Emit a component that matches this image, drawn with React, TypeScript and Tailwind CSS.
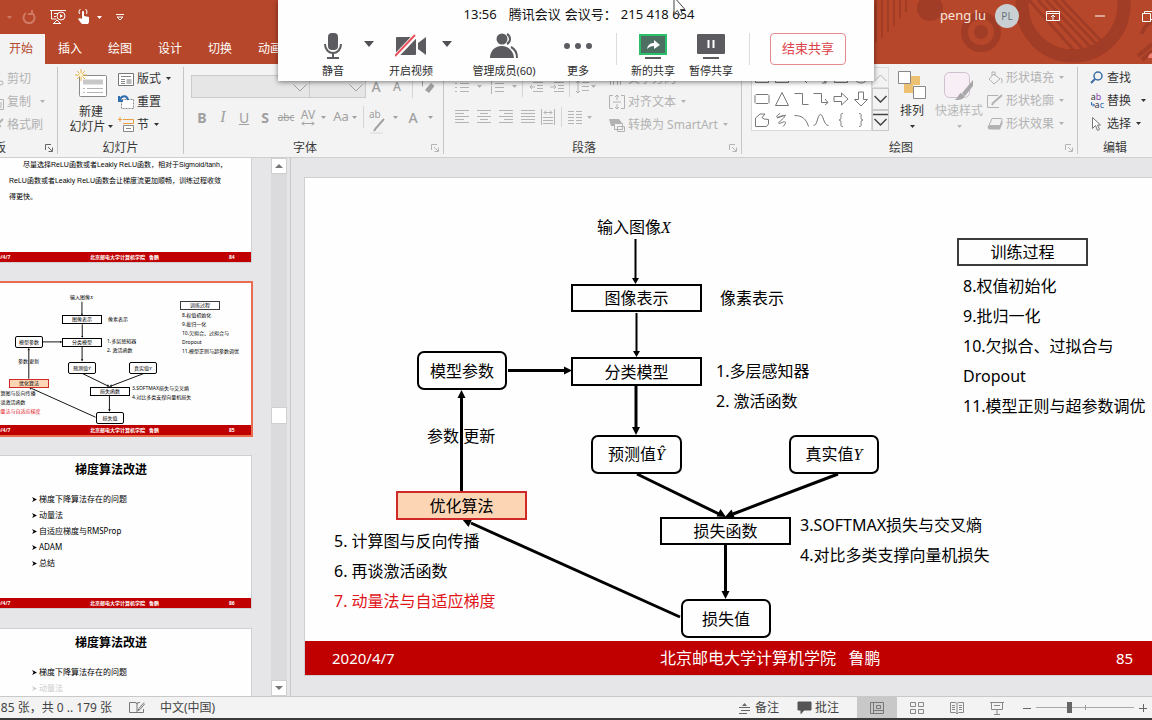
import React from "react";

const SLIDE_W = 884;
const SLIDE_H = 497;

type IconProps = { children: React.ReactNode; w?: number; h?: number; className?: string };

function Icon({ children, w = 16, h = 16, className = "" }: IconProps) {
  return (
    <svg
      width={w}
      height={h}
      viewBox={`0 0 ${w} ${h}`}
      fill="none"
      stroke="currentColor"
      aria-hidden="true"
      className={`shrink-0 ${className}`}
    >
      {children}
    </svg>
  );
}

function Caret({ className = "" }: { className?: string }) {
  return (
    <Icon w={5} h={3} className={className}>
      <path d="M0 0h5L2.5 3z" fill="currentColor" stroke="none" />
    </Icon>
  );
}

/* ---------- Slide content ---------- */

type Node = { x: number; y: number; w: number; h: number; kind: "box" | "round" | "hot" | "soft"; text: React.ReactNode };
type Note = { x: number; y: number; lines: { text: React.ReactNode; red?: boolean }[] };

const math = "font-['Liberation_Serif','Noto_Sans_CJK_SC',serif] italic";

const nodes: Node[] = [
  { x: 266, y: 106, w: 131, h: 28, kind: "box", text: "图像表示" },
  { x: 266, y: 179, w: 131, h: 29, kind: "box", text: "分类模型" },
  { x: 112, y: 173, w: 90, h: 39, kind: "round", text: "模型参数" },
  { x: 286, y: 257, w: 91, h: 39, kind: "round", text: <>预测值<i className={math}>Ŷ</i></> },
  { x: 484, y: 257, w: 90, h: 39, kind: "round", text: <>真实值<i className={math}>Y</i></> },
  { x: 355, y: 339, w: 131, h: 28, kind: "box", text: "损失函数" },
  { x: 376, y: 421, w: 90, h: 39, kind: "round", text: "损失值" },
  { x: 91, y: 313, w: 131, h: 29, kind: "hot", text: "优化算法" },
  { x: 652, y: 60, w: 131, h: 28, kind: "soft", text: "训练过程" },
];

const notes: Note[] = [
  { x: 292, y: 34, lines: [{ text: <>输入图像<i className={math}>X</i></> }] },
  { x: 415, y: 105, lines: [{ text: "像素表示" }] },
  { x: 411, y: 178, lines: [{ text: "1.多层感知器" }, { text: "2. 激活函数" }] },
  { x: 122, y: 243, lines: [{ text: "参数 更新" }] },
  { x: 495, y: 332, lines: [{ text: "3.SOFTMAX损失与交叉熵" }, { text: "4.对比多类支撑向量机损失" }] },
  {
    x: 29,
    y: 348,
    lines: [{ text: "5. 计算图与反向传播" }, { text: "6. 再谈激活函数" }, { text: "7. 动量法与自适应梯度", red: true }],
  },
  {
    x: 658,
    y: 93,
    lines: [
      { text: "8.权值初始化" },
      { text: "9.批归一化" },
      { text: "10.欠拟合、过拟合与" },
      { text: "Dropout" },
      { text: "11.模型正则与超参数调优" },
    ],
  },
];

const nodeStyle = {
  box: "border-black",
  round: "border-black",
  hot: "border-[#cf2a27] bg-[#fcd5b5]",
  soft: "border-[#3c3c3c]",
};

function Diagram({ scale }: { scale: number }) {
  const s = (n: number) => Math.round(n * scale);
  const small = scale < 1;
  return (
    <div className={small ? "text-[5px]" : "text-[16px]"}>
      <svg
        width={s(SLIDE_W)}
        height={s(SLIDE_H)}
        viewBox={`0 0 ${SLIDE_W} ${SLIDE_H}`}
        className="absolute top-0 left-0"
        fill="none"
        stroke="#000"
        strokeWidth={small ? 3 : 2}
        aria-hidden="true"
      >
        <path d="M330.500 61V102M331.500 135V175" />
        <path d="M203 192.500H260M156.500 313V220M331 208V250M420.500 367V415" strokeWidth="3" />
        <path d="M332 296L414 336M533 296L428 336M375 439L166 345" strokeWidth="3" />
        <g fill="#000" stroke="none">
          <path d="M327 100h7l-3.500 6z M328 173h7l-3.500 6z M259 188.500l8 4-8 4z M152.500 220l4-8 4 8z M327 249h8l-4 8z M416.500 413h8l-4 8z" />
          <path d="M421 339l-9.500-.5 4-7.500z M420 339l6.500-7.500 3 7.500z M157 341l10 .5-3.500 7.500z" />
        </g>
      </svg>
      {nodes.map((n, i) => (
        <div
          key={i}
          className={`absolute flex items-center justify-center whitespace-nowrap leading-none ${
            small ? "border" : "border-2"
          } ${n.kind === "round" ? (small ? "rounded-[2px]" : "rounded-[7px]") : ""} ${nodeStyle[n.kind]}`}
          style={{ left: s(n.x), top: s(n.y), width: s(n.w), height: s(n.h) }}
        >
          <span>{n.text}</span>
        </div>
      ))}
      {notes.map((n, i) => (
        <div
          key={i}
          className={`absolute whitespace-nowrap ${small ? "leading-[9px]" : "leading-[30px]"}`}
          style={{ left: s(n.x), top: s(n.y) }}
        >
          {n.lines.map((l, j) => (
            <p key={j} className={l.red ? "text-[#e0161b]" : ""}>
              {l.text}
            </p>
          ))}
        </div>
      ))}
    </div>
  );
}

function Slide({
  scale,
  page,
  selected = false,
  children,
}: {
  scale: number;
  page: number;
  selected?: boolean;
  children: React.ReactNode;
}) {
  const s = (n: number) => Math.round(n * scale);
  const small = scale < 1;
  return (
    <div
      className={`relative flex shrink-0 flex-col overflow-hidden bg-[#fefefe] text-black ${
        selected ? "shadow-[0_0_0_2px_#ea6c50]" : "shadow-[0_0_0_1px_#cfcfd2]"
      }`}
      style={{ width: s(SLIDE_W), height: s(SLIDE_H) }}
    >
      <div className="min-h-0 flex-1">{children}</div>
      <footer
        className={`flex items-center bg-[#c00000] whitespace-pre text-white ${
          small ? "text-[5px] leading-none font-bold" : "text-[15px]"
        }`}
        style={{ height: s(34) }}
      >
        <span style={{ paddingLeft: s(27), width: s(355) }}>2020/4/7</span>
        <span className={small ? "" : "text-[16px]"} style={{ width: s(456) }}>
          {"北京邮电大学计算机学院   鲁鹏"}
        </span>
        <span>{page}</span>
      </footer>
    </div>
  );
}

function OutlineSlide({ items, faded = 99 }: { items: string[]; faded?: number }) {
  return (
    <div>
      <h3 className="pt-[5px] pr-[10px] text-center text-[12px] leading-[18px] font-bold">梯度算法改进</h3>
      <ul className="mt-[12px] pl-[51px] text-[8px] leading-[16px]">
        {items.map((t, i) => (
          <li key={t} className={`flex items-center gap-[2px] whitespace-nowrap ${i >= faded ? "text-[#cccccc]" : ""}`}>
            <Icon w={5} h={5}>
              <path d="M0 0L5 2.500L0 5L1.500 2.500z" fill="currentColor" stroke="none" />
            </Icon>
            {t}
          </li>
        ))}
      </ul>
    </div>
  );
}

/* ---------- Ribbon ---------- */

function Group({
  label,
  className = "",
  launcher = true,
  dark = false,
  labelClass,
  children,
}: {
  label: string;
  className?: string;
  launcher?: boolean;
  dark?: boolean;
  labelClass?: string;
  children: React.ReactNode;
}) {
  return (
    <section className={`relative flex shrink-0 flex-col ${className}`} aria-label={label}>
      <div className="flex h-[75px] overflow-hidden">{children}</div>
      <div
        className={`flex h-[19px] items-center text-[12px] whitespace-nowrap text-[#3a3a3a] ${
          labelClass ?? (launcher ? "justify-center pr-[17px]" : "justify-center")
        }`}
      >
        {label}
      </div>
      {launcher && (
        <button
          aria-label={`${label}选项`}
          className={`absolute right-[4px] bottom-[5px] ${dark ? "text-[#666]" : "text-[#b5b5b5]"}`}
        >
          <Icon w={8} h={8}>
            <path d="M.5 6V.5H6M3 3l4 4M7.500 3.500v4h-4" />
          </Icon>
        </button>
      )}
    </section>
  );
}

function VLine({ className = "" }: { className?: string }) {
  return <span className={`my-[3px] w-px shrink-0 bg-[#c6c6c6] ${className}`} />;
}

function Row({
  icon,
  text,
  caret = false,
  disabled = false,
  className = "",
}: {
  icon: React.ReactNode;
  text: string;
  caret?: boolean;
  disabled?: boolean;
  className?: string;
}) {
  return (
    <button
      className={`flex h-[23px] items-center gap-[3px] text-[12px] whitespace-nowrap ${
        disabled ? "text-[#b2b2b2]" : "text-[#333]"
      } ${className}`}
    >
      {icon}
      <span>{text}</span>
      {caret && <Caret className="ml-[2px]" />}
    </button>
  );
}

function Lines({ d, className = "" }: { d: string; className?: string }) {
  return (
    <Icon w={14} h={16} className={className}>
      <path d={d} />
    </Icon>
  );
}

function Tool({ label, className, children }: { label: string; className: string; children: React.ReactNode }) {
  return (
    <button aria-label={label} className={`flex shrink-0 items-center justify-center ${className}`}>
      {children}
    </button>
  );
}

const shapePaths = [
  "M1.500 3.500h13v9h-13zM4 6h8M4 8h8",
  "M1.500 3.500h13v9h-13zM4 6h8M4 8h8M4 10h8",
  "M3 3l10 10",
  "M3 3l10 10M13 9v4H9",
  "M1.500 3.500h13v9h-13z",
  "M2 8a6 5 0 1 0 12 0a6 5 0 1 0-12 0",
  "M2 3.500h12l1 1v7l-1 1H2l-1-1v-7z",
  "M8 1.500L14.500 14.500H1.500z",
  "M.5 2.500h8v11h6",
  "M.5 2.500h8v9h6M12 8l3 3.500-3 2.500",
  "M1 5.500h7.500V2l6.500 6-6.500 6v-3.500H1z",
  "M5.500 1v7.500H1.500L8 15l6.500-6.500h-4V1z",
  "M1.500 14.500V6l4.500-4h5L8 5.500l2 1.500 4.500.5v4.500l-2 2.500z",
  "M6 1.500c-5 3-4 5 0 3s7-1 2 3-4 5 0 3 5 0 1 4M3 6l9-3",
  "M.5 3.500c8 0 12 4 14 11",
  "M.5 13.500c4 0 4-11 7-11s3 11 8 11",
  "M10 1.500c-3 0-2 2-2 4s-1 2.500-2 2.500c1 0 2 .5 2 2.500s-1 4 2 4",
  "M6 1.500c3 0 2 2 2 4s1 2.500 2 2.500c-1 0-2 .5-2 2.500s1 4-2 4",
];

function TitleArt() {
  return (
    <svg width="290" height="64" viewBox="0 0 290 64" className="absolute top-0 right-0" fill="none" aria-hidden="true">
      <g stroke="#a23d25" strokeWidth="2">
        <path d="M14 0v42M20 0v38M26 0v32M32 0v26M38 0v18M44 0v12" />
      </g>
      <circle cx="68" cy="8" r="13" fill="#a13c26" />
      <circle cx="119" cy="32" r="16.500" stroke="#a13c26" strokeWidth="7" />
      <circle cx="119" cy="32" r="7" fill="#a13c26" />
      <circle cx="211" cy="5" r="51" stroke="#a13c26" strokeWidth="13" />
      <path d="M176 0l50 55M184 0l50 53M192 0l48 50M200 0l44 46M167 0l50 56" stroke="#a13c26" strokeWidth="3" />
      <path d="M290 22a16 16 0 0 0-10 12M276 56l14-12M280 60l10-9" stroke="#a13c26" strokeWidth="4" />
      <path d="M286 58a6 6 0 0 1 4-5v5z" fill="#f08070" />
    </svg>
  );
}

function Ribbon() {
  return (
    <div className="flex h-[94px] shrink-0 overflow-hidden border-b border-[#cfcfd1] bg-[#f3f3f3]">
      <Group label="剪贴板" dark labelClass="justify-end pr-[51px]" className="w-[57px] overflow-hidden">
        <div className="-ml-[12px] flex flex-col pt-[3px]">
          <Row
            disabled
            text="剪切"
            icon={
              <Icon>
                <path d="M3 2l8 9M12 2L5 11" />
                <circle cx="4" cy="12" r="2" />
                <circle cx="13" cy="12" r="2" />
              </Icon>
            }
          />
          <Row
            disabled
            caret
            text="复制"
            className="[&>svg:last-child]:ml-[6px]"
            icon={
              <Icon>
                <path d="M2.500 1.500h7v10h-7zM7.500 5.500h8v10h-8zM9 9h5M9 11h5M9 13h5" />
              </Icon>
            }
          />
          <Row
            disabled
            text="格式刷"
            icon={
              <Icon>
                <path d="M15 2l-5 5M8 5l4 4-3 4-5-5z" fill="currentColor" strokeWidth="2" />
              </Icon>
            }
          />
        </div>
      </Group>
      <VLine />

      <Group label="幻灯片" launcher={false} className="w-[125px]">
        <button className="ml-[10px] flex w-[46px] shrink-0 flex-col items-center pt-[5px] text-[12px] leading-[15px] text-[#333]">
          <Icon w={32} h={35}>
            <rect x="4.500" y="6.500" width="27" height="21" rx="1" fill="#fff" stroke="#8a8a8a" />
            <path d="M8 10.500h20v5H8z" fill="#c8c8c8" stroke="none" />
            <path d="M8 19.500h2m2 0h16M8 23.500h2m2 0h16" stroke="#b5b5b5" />
            <path d="M6 0v12M0 6h12M2 2l8 8M10 2l-8 8" stroke="#e9b44c" />
            <circle cx="6" cy="6" r="2" fill="#fff3d0" stroke="none" />
          </Icon>
          <span>新建</span>
          <span className="flex items-center gap-[2px] whitespace-nowrap">
            幻灯片
            <Caret />
          </span>
        </button>
        <div className="ml-[4px] flex flex-col pt-[3px]">
          <Row
            caret
            text="版式"
            icon={
              <Icon>
                <path d="M.5 2.500h15v12H.5z" fill="#fff" stroke="#777" />
                <path d="M3 5.500h10M3 8.500h4M3 10.500h4M3 12.500h4" stroke="#888" />
                <path d="M8.500 8h5v5h-5z" fill="#bbb" stroke="none" />
              </Icon>
            }
          />
          <Row
            text="重置"
            icon={
              <Icon>
                <path d="M3.500 5.500h12v9h-12z" fill="#fff" stroke="#888" strokeDasharray="2 1" />
                <path d="M1.500 6C4 1 9 1 10 6M1 2v5h4" stroke="#2f6fb0" strokeWidth="2" />
              </Icon>
            }
          />
          <Row
            caret
            text="节"
            icon={
              <Icon>
                <path d="M0 2.500h4M2 0v5M5 2.500h10.500v4H5" stroke="#e8a046" />
                <path d="M5.500 8.500h10v6h-10zM8 11.500h5" fill="#fff" stroke="#888" />
              </Icon>
            }
          />
        </div>
      </Group>
      <VLine />

      <Group label="字体" className="w-[259px]">
        <div className="flex w-full flex-col pt-[11px] pl-[7px] text-[#a0a0a0]">
          <div className="flex h-[23px] items-center">
            {["字体", "字号"].map((name, i) => (
              <div
                key={name}
                className={`relative h-full border border-[#cbcbcb] bg-[#e6e6e6] ${i ? "-ml-px w-[57px]" : "w-[119px]"}`}
              >
                <select aria-label={name} className="h-full w-full appearance-none bg-transparent">
                  <option></option>
                </select>
                <Icon w={14} h={8} className="pointer-events-none absolute right-[2px] bottom-[5px]">
                  <path d="M.5.5l6.500 6.500 6.500-6.500" />
                </Icon>
              </div>
            ))}
            <Tool label="增大字号" className="ml-[1px] w-[18px] text-[14px] font-medium">
              A
            </Tool>
            <Tool label="减小字号" className="ml-[3px] w-[18px] text-[12px] font-medium">
              A
            </Tool>
            <span className="ml-[6px] h-[22px] w-px bg-[#d5d5d5]" />
            <Tool label="清除格式" className="ml-[6px] w-[16px]">
              <Icon>
                <path d="M1 1.500h5M3.500 1.500v6" />
                <path d="M6 11l6-7 3.500 3-5.500 7z" fill="currentColor" stroke="none" />
              </Icon>
            </Tool>
          </div>
          <div className="mt-[8px] flex h-[22px] items-center text-[14px]">
            <Tool label="加粗" className="w-[22px] font-bold">B</Tool>
            <Tool label="倾斜" className="w-[20px] font-['Liberation_Serif',serif] text-[16px] italic">I</Tool>
            <Tool label="下划线" className="w-[22px] underline">U</Tool>
            <Tool label="阴影" className="w-[20px] font-bold">S</Tool>
            <Tool label="删除线" className="w-[22px] text-[10px] line-through">abc</Tool>
            <Tool label="字符间距" className="w-[22px] flex-col text-[12px] leading-[12px]">
              AV
              <Icon w={14} h={5}>
                <path d="M1 2.500h12M3 .5l-2 2 2 2M11 .5l2 2-2 2" />
              </Icon>
            </Tool>
            <Caret className="ml-[2px]" />
            <Tool label="更改大小写" className="ml-[5px] w-[20px] text-[13px]">Aa</Tool>
            <Caret className="ml-[1px]" />
            <span className="ml-[6px] h-[22px] w-px bg-[#d5d5d5]" />
            <Tool label="突出显示" className="relative ml-[5px] w-[18px] text-[10px]">
              <span className="-mt-[6px] w-full text-left leading-[12px]">ab</span>
              <Icon w={18} h={18} className="absolute top-[2px] left-0">
                <path d="M15 3l-8 9-2 3" strokeWidth="2" />
                <path d="M1 17h13" stroke="#d8d8d8" />
              </Icon>
            </Tool>
            <Caret className="ml-[6px]" />
            <Tool label="字体颜色" className="ml-[6px] w-[18px] font-medium">A</Tool>
            <Caret className="ml-[6px]" />
          </div>
        </div>
      </Group>
      <VLine />

      <Group label="段落" className="w-[297px]">
        <div className="flex w-[165px] shrink-0 flex-col pt-[11px] pl-[11px] text-[#b4b4b4]">
          <div className="flex h-[23px] items-center">
            <Lines d="M0 4.500h2M5 4.500h9M0 8.500h2M5 8.500h9M0 12.500h2M5 12.500h9" />
            <Caret className="ml-[8px]" />
            <Lines className="ml-[8px]" d="M1.500 2v4M5 4.500h9M1.500 7v4M5 8.500h9M1.500 11v4M5 12.500h9" />
            <Caret className="ml-[8px]" />
            <span className="ml-[5px] h-[20px] w-px bg-[#d5d5d5]" />
            <Lines className="ml-[6px]" d="M4 3.500h10M8 6.500h6M8 9.500h6M4 12.500h10M6 8H1M3 6L1 8l2 2" />
            <Lines className="ml-[7px]" d="M4 3.500h10M8 6.500h6M8 9.500h6M4 12.500h10M0 8h6M4 6l2 2-2 2" />
            <span className="ml-[5px] h-[20px] w-px bg-[#d5d5d5]" />
            <Lines className="ml-[5px]" d="M7 3.500h7M7 7.500h7M7 11.500h7M3 2v12M1 4l2-2 2 2M1 12l2 2 2-2" />
            <Caret className="ml-[2px]" />
          </div>
          <div className="mt-[8px] flex h-[22px] items-center">
            <Lines d="M0 1.500h14M0 4.500h9M0 7.500h14M0 10.500h9M0 13.500h14" />
            <Lines className="ml-[8px]" d="M0 1.500h14M3 4.500h8M0 7.500h14M3 10.500h8M0 13.500h14" />
            <Lines className="ml-[8px]" d="M0 1.500h14M5 4.500h9M0 7.500h14M5 10.500h9M0 13.500h14" />
            <Lines className="ml-[8px]" d="M0 1.500h14M0 4.500h14M0 7.500h14M0 10.500h14M0 13.500h14" />
            <Lines className="ml-[6px]" d="M.5 0v16M13.500 0v16M3 3.500h8M5 1.500l-2 2 2 2M9 1.500l2 2-2 2M2 8.500h10M2 11.500h10M2 14.500h10" />
            <span className="ml-[6px] h-[20px] w-px bg-[#d5d5d5]" />
            <Lines className="ml-[6px]" d="M0 2.500h6M8 2.500h6M0 5.500h6M8 5.500h6M0 8.500h6M8 8.500h6M0 11.500h6M8 11.500h6M0 14.500h6M8 14.500h6" />
            <Caret className="ml-[5px]" />
          </div>
        </div>
        <div className="flex flex-col pt-[3px]">
          <Row
            disabled
            caret
            text="文字方向"
            icon={
              <Icon>
                <path d="M1.500 2v12M4.500 2v12M8.500 2v12M11.500 2v12" />
              </Icon>
            }
          />
          <Row
            disabled
            caret
            text="对齐文本"
            icon={
              <Icon>
                <path d="M4 1.500H.5v13H4M12 1.500h3.500v13H12M8 1v5M6 3l2-2 2 2M8 10v5M6 13l2 2 2-2M4 8h8" />
              </Icon>
            }
          />
          <Row
            disabled
            caret
            text="转换为 SmartArt"
            icon={
              <Icon>
                <path d="M0 2h10l3 4H5v3H2z" fill="currentColor" stroke="none" />
                <path d="M5.500 6.500h8v6h-8zM8.500 9.500h7v5h-7z" fill="#f3f3f3" />
              </Icon>
            }
          />
        </div>
      </Group>
      <VLine />

      <Group label="绘图" className="w-[335px] grow">
        <div className="ml-[9px] flex h-[67px] shrink-0 self-start pt-[3px]">
          <div className="grid h-full w-[121px] grid-cols-6 border border-[#d8d8d8] bg-white text-[#777]">
            {shapePaths.map((d) => (
              <span key={d} className="flex items-center justify-center">
                <Icon>
                  <path d={d} />
                </Icon>
              </span>
            ))}
          </div>
          <div className="flex w-[17px] flex-col text-[#444]">
            <button aria-label="上一行" className="flex flex-1 items-center justify-center border border-[#dcdcdc] text-[#b5b5b5]">
              <Icon w={13} h={8}>
                <path d="M.5 7l6-6 6 6" />
              </Icon>
            </button>
            <button aria-label="下一行" className="flex flex-1 items-center justify-center border border-[#c8c8c8]">
              <Icon w={13} h={8}>
                <path d="M.5 1l6 6 6-6" strokeWidth="1.500" />
              </Icon>
            </button>
            <button aria-label="更多形状" className="flex flex-1 items-center justify-center border border-[#c8c8c8]">
              <Icon w={15} h={14}>
                <path d="M0 1.500h15M1.500 6l6 6 6-6" strokeWidth="1.500" />
              </Icon>
            </button>
          </div>
        </div>
        <button className="ml-[8px] flex w-[30px] shrink-0 flex-col items-center pt-[7px] text-[12px] text-[#333]">
          <Icon w={28} h={28}>
            <path d="M13 5h9v9h-9zM6 13h9v9H6z" fill="#ecc272" stroke="none" />
            <path d="M.5.5h12v12H.5zM15.500 15.500h12v12h-12z" fill="#fff" stroke="#888" />
          </Icon>
          <span className="mt-[4px] leading-[16px]">排列</span>
          <Caret className="mt-[6px]" />
        </button>
        <button className="ml-[7px] flex w-[50px] shrink-0 flex-col items-center pt-[7px] text-[12px] text-[#b8b8b8]">
          <Icon w={30} h={30}>
            <rect x=".5" y="1.500" width="25" height="25" rx="5" fill="#f8eef6" stroke="#cfc0cf" />
            <path d="M29 9L18 22l3 3 8-10z" fill="#a8a8a8" stroke="none" />
            <path d="M17 22l4 3c-2 4-6 4-11 4 4-1 4-6 7-7z" fill="#a8a8a8" stroke="none" />
          </Icon>
          <span className="mt-[2px] leading-[16px] whitespace-nowrap">快速样式</span>
          <Caret className="mt-[6px]" />
        </button>
        <div className="ml-[3px] flex flex-col pt-[2px]">
          <Row
            disabled
            caret
            text="形状填充"
            icon={
              <Icon>
                <path d="M7 4l6 5-6 5-5-5zM5 6V2h3v4M14 8c2 3 1 5 0 5" />
              </Icon>
            }
          />
          <Row
            disabled
            caret
            text="形状轮廓"
            icon={
              <Icon>
                <path d="M11 2.500H.5v12H12" />
                <path d="M15 2L6 10l-1 2" strokeWidth="2" />
              </Icon>
            }
          />
          <Row
            disabled
            caret
            text="形状效果"
            icon={
              <Icon>
                <path d="M5 2.500h9c1 0 1.500.5 1 1.500L13 9.500H2z" fill="#f3f3f3" />
                <path d="M1 9.500h12l2.500-5v3L13 13.500H3c-2 0-3-2-2-4z" fill="currentColor" stroke="none" />
              </Icon>
            }
          />
        </div>
      </Group>
      <VLine />

      <Group label="编辑" launcher={false} className="w-[74px]">
        <div className="ml-[10px] flex flex-col pt-[2px]">
          <Row
            text="查找"
            icon={
              <Icon>
                <circle cx="10" cy="6" r="4" stroke="#3a6ea5" strokeWidth="1.500" />
                <path d="M7 9l-4 4" stroke="#3a6ea5" strokeWidth="2" />
              </Icon>
            }
          />
          <Row
            text="替换"
            caret
            className="[&>svg:last-child]:ml-[7px]"
            icon={
              <span className="flex w-[16px] shrink-0 flex-col text-[9px] leading-[8px]">
                <span>
                  a<span className="text-[#8e44ad]">b</span>
                </span>
                <span className="flex items-center justify-end">
                  <Icon w={4} h={5}>
                    <path d="M.5 0v3h3M2 1.500L3.500 3 2 4.500" stroke="#2f6fb0" />
                  </Icon>
                  a<span className="text-[#2f6fb0]">c</span>
                </span>
              </span>
            }
          />
          <Row
            text="选择"
            caret
            icon={
              <Icon>
                <path d="M4.500 1.500v11l3-3 2 5 2-1-2-4.500h3z" stroke="#777" fill="#fff" />
              </Icon>
            }
          />
        </div>
      </Group>
    </div>
  );
}

/* ---------- Meeting bar ---------- */

function MeetTool({ label, className, children }: { label: string; className: string; children: React.ReactNode }) {
  return (
    <button className={`flex shrink-0 flex-col items-center text-[11px] whitespace-nowrap text-[#2c2c2c] ${className}`}>
      <span className="flex h-[34px] items-center text-[#5b5b60]">{children}</span>
      <span className="leading-[16px]">{label}</span>
    </button>
  );
}

function MeetCaret({ label, className }: { label: string; className: string }) {
  return (
    <button aria-label={label} className={`flex h-[30px] shrink-0 items-center justify-center text-[#505055] ${className}`}>
      <Icon w={10} h={6}>
        <path d="M0 0h10L5 6z" fill="currentColor" stroke="none" />
      </Icon>
    </button>
  );
}

function MeetingBar() {
  return (
    <div className="absolute top-0 left-1/2 z-10 h-[81px] w-[596px] -translate-x-1/2 bg-[#fefefe] shadow-[0_1px_5px_rgba(0,0,0,0.5)]">
      <p className="flex h-[29px] items-center justify-center gap-[12px] pl-[6px] text-[13px] text-[#111]">
        <span>13:56</span>
        <span className="flex gap-[4px]">
          <span>腾讯会议</span>
          <span>会议号：</span>
          <span>215 418 654</span>
        </span>
      </p>
      <div className="flex pl-[31px]">
        <MeetTool label="静音" className="w-[48px]">
          <Icon w={20} h={28}>
            <rect x="5" y="1" width="10" height="17" rx="4" fill="currentColor" stroke="none" />
            <path d="M2 12c0 12 16 12 16 0M10 21v5M4 26h12" strokeWidth="2" />
          </Icon>
        </MeetTool>
        <MeetCaret label="音频选项" className="w-[24px]" />
        <MeetTool label="开启视频" className="w-[60px]">
          <Icon w={32} h={24}>
            <path d="M2 3h18q1 0 1 1v16q0 1-1 1H2q-1 0-1-1V4q0-1 1-1zM23 9l8-6v18l-8-6z" fill="currentColor" stroke="none" />
            <path d="M1 22L21 1" stroke="#fff" strokeWidth="5" />
            <path d="M0 22L20 1" stroke="#e8545c" strokeWidth="2" />
          </Icon>
        </MeetTool>
        <MeetCaret label="视频选项" className="w-[12px]" />
        <MeetTool label="管理成员(60)" className="ml-[11px] w-[80px]">
          <Icon w={30} h={28}>
            <circle cx="13" cy="7" r="5.500" fill="currentColor" stroke="none" />
            <path d="M1 26c0-16 23-16 24 0z" fill="currentColor" stroke="none" />
            <path d="M18 2c4 2 4 8 0 10M22 15c4 2 6 6 6 11" strokeWidth="2" />
          </Icon>
        </MeetTool>
        <MeetTool label="更多" className="ml-[12px] w-[44px]">
          <Icon w={30} h={8}>
            <path d="M1 4a3 3 0 1 0 6 0a3 3 0 1 0-6 0M12 4a3 3 0 1 0 6 0a3 3 0 1 0-6 0M23 4a3 3 0 1 0 6 0a3 3 0 1 0-6 0" fill="currentColor" stroke="none" />
          </Icon>
        </MeetTool>
        <span className="mt-[4px] ml-[16px] h-[32px] w-px bg-[#dcdcdc]" />
        <MeetTool label="新的共享" className="ml-[10px] w-[52px]">
          <Icon w={28} h={26}>
            <rect x="1" y="2" width="26" height="19" fill="#4d6f62" stroke="#2bbf6c" strokeWidth="2" />
            <path d="M8 16c1-5 4-6 7-6V7l6 5-6 4v-3c-3 0-5 1-7 3z" fill="#fff" stroke="none" />
            <path d="M6 25h16" strokeWidth="2" />
          </Icon>
        </MeetTool>
        <MeetTool label="暂停共享" className="ml-[6px] w-[52px]">
          <Icon w={28} h={26}>
            <rect x="0" y="1" width="28" height="20" rx="1" fill="currentColor" stroke="none" />
            <path d="M11.500 7v8M16.500 7v8" stroke="#fff" strokeWidth="2" />
            <path d="M6 25h16" strokeWidth="2" />
          </Icon>
        </MeetTool>
        <span className="mt-[4px] ml-[12px] h-[32px] w-px bg-[#dcdcdc]" />
        <button className="mt-[4px] ml-[20px] h-[32px] w-[76px] rounded-[4px] border border-[#e58a8e] text-[13px] text-[#db4148]">
          结束共享
        </button>
      </div>
      <svg width="14" height="18" viewBox="0 0 14 18" className="absolute top-0 left-[395px]" aria-hidden="true">
        <path d="M1 -3V13.500L4.500 10.500L7 15.500L9.500 14.500L7.500 9.500H12z" fill="#fff" stroke="#444" />
      </svg>
    </div>
  );
}

/* ---------- Page ---------- */

export default function App() {
  return (
    <div className="relative flex h-screen flex-col overflow-hidden bg-[#e6e6e8] font-['Noto_Sans','Noto_Sans_CJK_SC',sans-serif] leading-normal">
      <header className="relative shrink-0 bg-[#b7472a] text-white">
        <TitleArt />
        <div className="relative flex h-[34px] items-center">
          <Caret className="ml-[7px] text-[#cf7a64]" />
          <button aria-label="重做" className="ml-[10px] text-[#cf7a64]">
            <Icon w={14} h={14}>
              <path d="M4 3a5.500 5.500 0 1 0 6 0M10 0v4H6" strokeWidth="2" />
            </Icon>
          </button>
          <button aria-label="从头放映" className="ml-[14px]">
            <Icon>
              <path d="M0 1.500h16M1.500 2v8h5M4 4.500h4M4 7.500h2M3 15l4-4 3 3M4 14.500h7" />
              <circle cx="11" cy="7" r="4" />
              <path d="M10 5l3 2-3 2z" fill="currentColor" stroke="none" />
            </Icon>
          </button>
          <button aria-label="触摸模式" className="ml-[11px]">
            <Icon w={14} h={16}>
              <path d="M4 14L1 10l2-1 2 1V3c0-1.500 2-1.500 2 0v4l5 1v5l-1 2H5z" fill="currentColor" stroke="none" />
              <path d="M2.500 5a4 4 0 1 1 7 0" />
            </Icon>
          </button>
          <Caret className="ml-[6px]" />
          <button aria-label="自定义快速访问工具栏" className="ml-[14px]">
            <Icon w={8} h={7}>
              <path d="M0 .5h8M1 3l3 3 3-3z" />
            </Icon>
          </button>
          <div className="ml-auto flex h-[32px] items-center self-start">
            <span className="text-[13px] text-[#fbe3dc]">peng lu</span>
            <span className="ml-[9px] flex h-[24px] w-[24px] items-center justify-center rounded-full bg-[#c9d0d3] text-[10px] text-[#66747c]">
              PL
            </span>
            <button aria-label="功能区显示选项" className="ml-[27px]">
              <Icon w={14} h={12}>
                <path d="M.5 1.500h13v9H.5zM.5 3.500h13M7 10V5M5 7l2-2 2 2" />
              </Icon>
            </button>
            <button aria-label="最小化" className="ml-[35px]">
              <Icon w={10} h={2}>
                <path d="M0 1h10" />
              </Icon>
            </button>
            <button aria-label="还原" className="-mr-[1px] ml-[37px]">
              <Icon w={11} h={11}>
                <path d="M.5 2.500h8v8h-8zM2.500 2V.5h8v8H9" />
              </Icon>
            </button>
          </div>
        </div>
        <nav className="relative flex h-[30px] text-[12px]">
          <button className="w-[45px] bg-[#f3f3f3] pr-[5px] text-right text-[#b7472a]">
            <span className="mr-[7px]">开始</span>
          </button>
          {["插入", "绘图", "设计", "切换", "动画"].map((t) => (
            <button key={t} className="w-[50px]">
              {t}
            </button>
          ))}
        </nav>
      </header>

      <Ribbon />

      <main className="flex min-h-0 flex-1">
        <aside className="flex shrink-0 border-r border-[#c6c6c9] pr-[3px]">
          <div className="w-[271px] overflow-hidden">
            <div className="-mt-[48px] -ml-[19px] flex flex-col items-start gap-[21px]">
              <Slide scale={0.3057} page={84}>
                <div className="pt-[47px] pl-[28px] font-['Liberation_Sans','Noto_Sans_CJK_SC',sans-serif] text-[7px] leading-[16px] whitespace-nowrap">
                  <p className="pl-[14px]">尽量选择ReLU函数或者Leakly ReLU函数，相对于Sigmoid/tanh，</p>
                  <p>ReLU函数或者Leakly ReLU函数会让梯度流更加顺畅，训练过程收敛</p>
                  <p>得更快。</p>
                </div>
              </Slide>
              <Slide scale={0.3057} page={85} selected>
                <Diagram scale={0.3057} />
              </Slide>
              <Slide scale={0.3057} page={86}>
                <OutlineSlide items={["梯度下降算法存在的问题", "动量法", "自适应梯度与RMSProp", "ADAM", "总结"]} />
              </Slide>
              <Slide scale={0.3057} page={87}>
                <OutlineSlide items={["梯度下降算法存在的问题", "动量法"]} faded={1} />
              </Slide>
            </div>
          </div>
          <div className="flex w-[16px] flex-col items-center bg-[#dbdbdd] text-[#777]">
            <button aria-label="向上滚动" className="flex h-[16px] w-full items-center justify-center border border-[#cfcfcf] bg-white">
              <Icon w={8} h={4}>
                <path d="M0 4h8L4 0z" fill="currentColor" stroke="none" />
              </Icon>
            </button>
            <span className="grow-[10]" />
            <span className="h-[17px] w-full border border-[#cfcfcf] bg-white" />
            <span className="grow-[11]" />
            <button aria-label="向下滚动" className="flex h-[16px] w-full items-center justify-center border border-[#cfcfcf] bg-white">
              <Icon w={8} h={4}>
                <path d="M0 0h8L4 4z" fill="currentColor" stroke="none" />
              </Icon>
            </button>
          </div>
        </aside>
        <div className="min-w-0 flex-1 overflow-hidden pt-[20px] pl-[14px]">
          <Slide scale={1} page={85}>
            <Diagram scale={1} />
          </Slide>
        </div>
      </main>

      <footer className="flex h-[24px] shrink-0 items-center border-t border-b-2 border-t-[#c9c9c9] border-b-[#3a3a3a] bg-[#f3f3f3] text-[12px] text-[#444]">
        <span className="flex w-[112px] shrink-0 justify-end whitespace-nowrap">85 张，共 0 .. 179 张</span>
        <button aria-label="拼写检查" className="ml-[17px] text-[#777]">
          <Icon>
            <path d="M8 3.500v9H.5v-10H6q2 0 2 1.500M8 4q0-1.500 2-1.500h1M14.500 9v3.500H8M15 2.500l-5 6-1 2 2-1 5-6" />
          </Icon>
        </button>
        <button className="ml-[15px] whitespace-nowrap">中文(中国)</button>
        <div className="ml-auto flex h-full shrink-0 items-center">
          <button className="flex items-center gap-[5px]">
            <Icon w={11} h={12} className="text-[#666]">
              <path d="M0 5.500h11M2 8.500h9M0 11.500h8" />
              <path d="M3 4l2.500-3L8 4z" fill="currentColor" stroke="none" />
            </Icon>
            备注
          </button>
          <button className="ml-[18px] flex items-center gap-[3px]">
            <Icon w={15} h={13} className="text-[#555]">
              <path d="M1 1h13v8H7l-3 3.500V9H1z" fill="currentColor" />
            </Icon>
            批注
          </button>
          <button aria-label="普通视图" className="ml-[18px] flex h-full w-[40px] items-center justify-center bg-[#c8c8c8] text-[#777]">
            <Icon w={14} h={14}>
              <path d="M.5 1.500h13v11H.5zM3.500 2v10M3.500 9.500h10M6.500 4.500h4v3h-4z" />
            </Icon>
          </button>
          <button aria-label="幻灯片浏览" className="flex w-[40px] justify-center text-[#888]">
            <Icon w={14} h={14}>
              <path d="M.5 1.500h5v4h-5zM8.500 1.500h5v4h-5zM.5 8.500h5v4h-5zM8.500 8.500h5v4h-5z" />
            </Icon>
          </button>
          <button aria-label="阅读视图" className="flex w-[40px] justify-center text-[#888]">
            <Icon w={14} h={14}>
              <path d="M.5 1.500h5l1.500 1 1.500-1h5v10h-5L7 13l-1.500-1.500h-5zM7 3v10M2 4.500h3M2 6.500h3M2 8.500h3M9 4.500h3M9 6.500h3M9 8.500h3" />
            </Icon>
          </button>
          <button aria-label="幻灯片放映" className="flex w-[40px] justify-center text-[#888]">
            <Icon w={14} h={14}>
              <path d="M0 1.500h14M1.500 2v6.500h11V2M7 9v4M4 13.500h6M4 4.500h6" />
            </Icon>
          </button>
          <button aria-label="缩小" className="ml-[6px] text-[#666]">
            <Icon w={8} h={8}>
              <path d="M0 4.500h8" />
            </Icon>
          </button>
          <div className="relative ml-[5px] flex h-full items-center">
            <span className="absolute left-[49px] h-[5px] w-px bg-[#999]" />
            <input
              type="range"
              aria-label="缩放"
              min={0}
              max={100}
              defaultValue={33}
              className="relative h-[12px] w-[98px] appearance-none bg-transparent [&::-webkit-slider-runnable-track]:h-px [&::-webkit-slider-runnable-track]:bg-[#a8a8a8] [&::-webkit-slider-thumb]:-mt-[5px] [&::-webkit-slider-thumb]:h-[11px] [&::-webkit-slider-thumb]:w-[5px] [&::-webkit-slider-thumb]:appearance-none [&::-webkit-slider-thumb]:bg-[#666]"
            />
          </div>
          <button aria-label="放大" className="mr-[5px] ml-[5px] text-[#666]">
            <Icon w={8} h={8}>
              <path d="M0 4.500h8M4.500 0v8" />
            </Icon>
          </button>
        </div>
      </footer>

      <MeetingBar />
    </div>
  );
}
